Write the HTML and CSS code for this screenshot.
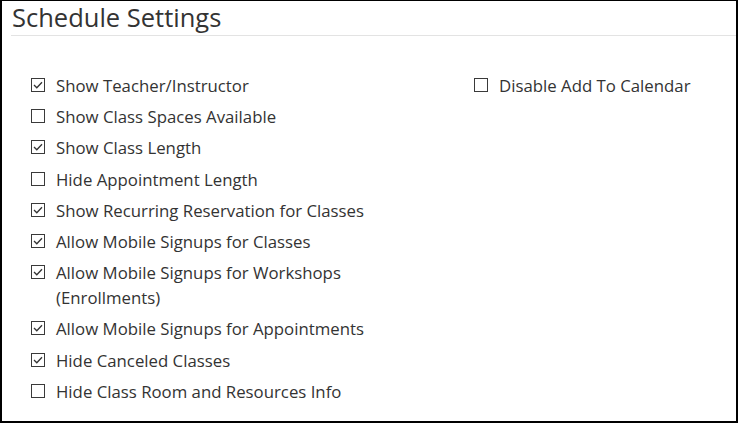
FILE: index.html
```html
<!DOCTYPE html>
<html lang="en">
<head>
<meta charset="utf-8">
<title>Schedule Settings</title>
<link rel="stylesheet" href="styles.css">
</head>
<body>
<div class="frame">
  <div class="header">
    <h2 class="title">Schedule Settings</h2>
  </div>
  <div class="settings">
    <div class="col col-left">
      <label class="opt"><span class="box checked"><svg viewBox="0 0 14 14"><polyline points="3,7 5.8,9.8 11,4.2"/></svg></span><span class="lbl">Show Teacher/Instructor</span></label>
      <label class="opt"><span class="box"></span><span class="lbl">Show Class Spaces Available</span></label>
      <label class="opt"><span class="box checked"><svg viewBox="0 0 14 14"><polyline points="3,7 5.8,9.8 11,4.2"/></svg></span><span class="lbl">Show Class Length</span></label>
      <label class="opt"><span class="box"></span><span class="lbl">Hide Appointment Length</span></label>
      <label class="opt"><span class="box checked"><svg viewBox="0 0 14 14"><polyline points="3,7 5.8,9.8 11,4.2"/></svg></span><span class="lbl">Show Recurring Reservation for Classes</span></label>
      <label class="opt"><span class="box checked"><svg viewBox="0 0 14 14"><polyline points="3,7 5.8,9.8 11,4.2"/></svg></span><span class="lbl">Allow Mobile Signups for Classes</span></label>
      <label class="opt"><span class="box checked"><svg viewBox="0 0 14 14"><polyline points="3,7 5.8,9.8 11,4.2"/></svg></span><span class="lbl">Allow Mobile Signups for Workshops (Enrollments)</span></label>
      <label class="opt"><span class="box checked"><svg viewBox="0 0 14 14"><polyline points="3,7 5.8,9.8 11,4.2"/></svg></span><span class="lbl">Allow Mobile Signups for Appointments</span></label>
      <label class="opt"><span class="box checked"><svg viewBox="0 0 14 14"><polyline points="3,7 5.8,9.8 11,4.2"/></svg></span><span class="lbl">Hide Canceled Classes</span></label>
      <label class="opt"><span class="box"></span><span class="lbl">Hide Class Room and Resources Info</span></label>
    </div>
    <div class="col col-right">
      <label class="opt"><span class="box"></span><span class="lbl">Disable Add To Calendar</span></label>
    </div>
  </div>
</div>
</body>
</html>
```
FILE: styles.css
```css
html, body {
  margin: 0;
  padding: 0;
  background: #fff;
}
.frame {
  box-sizing: border-box;
  width: 738px;
  height: 423px;
  border: 2px solid #000;
  border-top-width: 1px;
  font-family: "Open Sans", "Noto Sans", sans-serif;
  color: #333;
  overflow: hidden;
}
.header {
  margin-left: 9px;
  padding-left: 1px;
  padding-bottom: 2px;
  border-bottom: 1px solid #e3e3e3;
}
.title {
  margin: 0;
  font-size: 25.5px;
  line-height: 32px;
  font-weight: 400;
  color: #333;
}
.settings {
  display: grid;
  grid-template-columns: 443px 1fr;
  padding: 37px 0 0 29px;
}
.col {
  display: flex;
  flex-direction: column;
  gap: 6.2px;
}
.opt {
  display: flex;
  align-items: flex-start;
  font-size: 16.8px;
  line-height: 25px;
}
.col-left .lbl {
  max-width: 345px;
}
.box {
  flex: none;
  position: relative;
  box-sizing: border-box;
  width: 14px;
  height: 14px;
  margin-top: 5px;
  margin-right: 11px;
  border: 1px solid #3a3a3a;
  background: #fff;
}
.box svg {
  position: absolute;
  left: -1px;
  top: -1px;
  display: block;
  width: 14px;
  height: 14px;
}
.box polyline {
  fill: none;
  stroke: #333;
  stroke-width: 1.3;
}
```
